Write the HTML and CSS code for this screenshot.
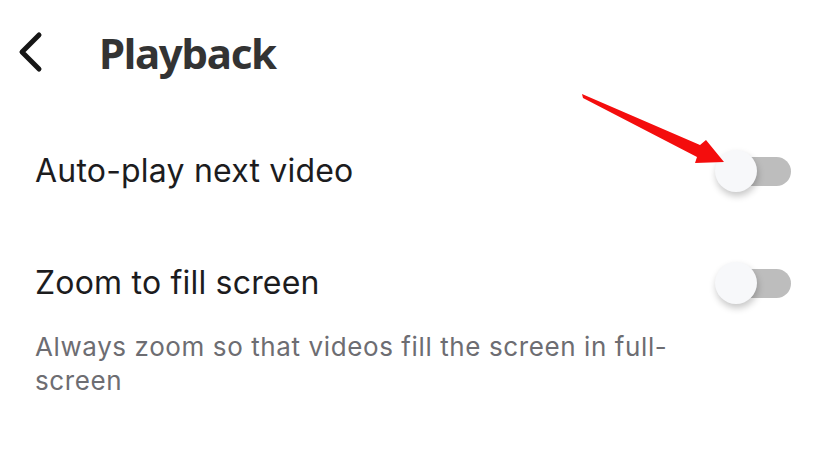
FILE: index.html
```html
<!DOCTYPE html>
<html lang="en">

<head>
    <meta charset="UTF-8">
    <meta name="viewport" content="width=device-width, initial-scale=1.0">
    <title>Playback</title>
    <link rel="stylesheet" href="styles.css">
</head>

<body>
    <div class="screen">
        <header class="top-bar">
            <button class="back-btn" aria-label="Back">
                <svg width="28" height="42" viewBox="0 0 28 42">
                    <path d="M23 4 L6 21 L23 38" fill="none" stroke="#161616" stroke-width="5"
                        stroke-linecap="round" stroke-linejoin="round" />
                </svg>
            </button>
            <h1 class="title">Playback</h1>
        </header>

        <div class="settings">
            <div class="setting-row first">
                <div class="setting-label">Auto-play next video</div>
                <div class="toggle">
                    <span class="knob"></span>
                </div>
            </div>

            <div class="setting-row second">
                <div class="setting-label">Zoom to fill screen</div>
                <div class="toggle">
                    <span class="knob"></span>
                </div>
            </div>
            <p class="setting-desc">Always zoom so that videos fill the screen in full-screen</p>
        </div>

        <!-- annotation arrow over the page -->
        <svg class="arrow" width="825" height="459" viewBox="0 0 825 459">
            <polygon points="582,94 700,145 706,140 724,162 695,163 697,157 583,98" fill="#f40d0d" />
        </svg>
    </div>
</body>

</html>
```

FILE: styles.css
```css
* {
    margin: 0;
    padding: 0;
    box-sizing: border-box;
}

body {
    background-color: #ffffff;
    font-family: 'Inter', 'Roboto', sans-serif;
    color: #1c1c1e;
}

.screen {
    position: relative;
    width: 825px;
    height: 459px;
    overflow: hidden;
}

.top-bar {
    display: flex;
    align-items: center;
    height: 104px;
    padding-left: 16px;
}

.back-btn {
    background: none;
    border: none;
    display: flex;
    width: 28px;
    height: 42px;
}

.title {
    margin-left: 55px;
    font-family: 'Noto Sans', 'DejaVu Sans', sans-serif;
    font-weight: 700;
    font-size: 42px;
    color: #333333;
    letter-spacing: -1.3px;
}

.setting-row {
    display: flex;
    align-items: center;
    justify-content: space-between;
    padding: 0 34px 0 35px;
}

.setting-row.first {
    height: 112px;
    margin-top: 11px;
}

.setting-row.second {
    height: 48px;
    margin-top: 32px;
}

.setting-label {
    font-size: 32px;
    line-height: 40px;
    letter-spacing: 0.2px;
}

.setting-desc {
    padding: 23px 150px 0 35px;
    font-size: 26px;
    line-height: 34px;
    letter-spacing: 0.6px;
    color: #6d6d72;
}

.toggle {
    position: relative;
    width: 70px;
    height: 29px;
    border-radius: 15px;
    background-color: #bdbdbd;
}

.knob {
    position: absolute;
    left: -6px;
    top: -6.5px;
    width: 42px;
    height: 42px;
    border-radius: 50%;
    background-color: #f7f8fa;
    box-shadow: 1px 4px 7px rgba(0, 0, 0, 0.22);
}

.arrow {
    position: absolute;
    left: 0;
    top: 0;
    pointer-events: none;
}
```
